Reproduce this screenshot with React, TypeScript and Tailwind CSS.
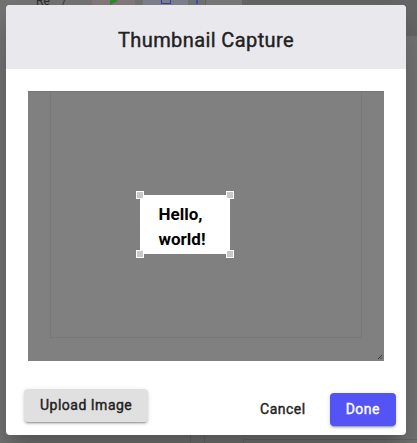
import React from "react";

function Handle() {
  return <div className="w-2 h-2 border border-white bg-[#c8c8c8]" />;
}

// Roboto Medium is not installed: regular weight thickened a little
const medium = "font-normal [-webkit-text-stroke:0.4px_currentColor]";

export default function App() {
  return (
    <div className="relative w-[417px] h-[443px] overflow-hidden bg-[#727272] font-['Roboto','Liberation_Sans',sans-serif]">
      {/* ---------- app behind the backdrop ---------- */}
      <div className="flex h-[36px]">
        <div className="flex items-start gap-3 pl-[36px] w-[92px] text-[12px] leading-[12px] text-[#2a2a2a] -mt-[5px]">
          <span>Re</span>
          <span className="text-[#333]">/</span>
        </div>
        <div className="w-[43px] bg-[#82777a] pl-[18px]">
          <div className="w-0 h-0 border-y-[4px] border-y-transparent border-l-[8px] border-l-[#2d8a2d] -mt-[3px]" />
        </div>
        <div className="w-[8px]" />
        <div className="w-[45px] bg-[#7d7f8c] flex justify-center">
          <div className="w-[10px] h-[4px] border-x border-b border-[#3c3ca8]" />
        </div>
        <div className="w-[17px] flex justify-center">
          <div className="w-[2px] h-[4px] bg-[#3b4fb0]" />
        </div>
        <div className="w-[37px] bg-[#777777] border-l border-[#666]" />
        <div className="flex-1 bg-[#656565]" />
      </div>
      <div className="flex h-[407px]">
        <div className="w-[190px]" />
        <div className="w-[15px] border-x border-[#666]" />
        <div className="flex-1 flex flex-col justify-end">
          <div className="ml-[38px] h-[4px] border-t border-l border-[#666]" />
        </div>
      </div>

      {/* ---------- dialog ---------- */}
      <div className="absolute left-[6px] top-[5px] w-[400px] h-[430px] bg-white rounded-[4px] shadow-[0_11px_15px_-7px_rgba(0,0,0,0.2),0_24px_38px_3px_rgba(0,0,0,0.14)] flex flex-col overflow-hidden">
        <div className="h-[64px] bg-[#e9e8ed] flex items-center justify-center pt-[6px]">
          <h2 className={`${medium} text-[20px] text-[#212121] tracking-[0.4px]`}>Thumbnail Capture</h2>
        </div>

        <div className="px-[22px] pt-[22px]">
          <div className="relative h-[270px] bg-[#808080] border-t border-[#757575]">
            <div className="mx-[22px] h-[246px] border-x border-b border-[#787878] flex items-start justify-center">
              <div className="relative mt-[103px] -ml-[43px] w-[90px] h-[59px] bg-white pl-[19px] pt-[7px]">
                <p className="text-[17px] font-bold leading-[25px] text-black">
                  Hello,
                  <br />
                  world!
                </p>
                <div className="absolute -left-[4px] -top-[4px]"><Handle /></div>
                <div className="absolute -right-[4px] -top-[4px]"><Handle /></div>
                <div className="absolute -left-[4px] -bottom-[4px]"><Handle /></div>
                <div className="absolute -right-[4px] -bottom-[4px]"><Handle /></div>
              </div>
            </div>
            {/* resize grip */}
            <svg className="absolute right-[1px] bottom-[1px]" width="6" height="6" viewBox="0 0 6 6">
              <path d="M5 1 L1 5 M5 3.5 L3.5 5" stroke="#333" strokeWidth="1" />
            </svg>
          </div>
        </div>

        <div className="flex-1 flex items-end justify-between pl-[18px] pr-[10px] pb-[9px]">
          <button className={`${medium} mb-[4px] h-[33px] px-4 rounded-[4px] bg-[#e0e0e0] text-[14px] tracking-[0.5px] text-[#212121] shadow-[0_3px_1px_-2px_rgba(0,0,0,0.2),0_2px_2px_0_rgba(0,0,0,0.14),0_1px_5px_0_rgba(0,0,0,0.12)]`}>
            Upload Image
          </button>
          <div className="flex items-center gap-2">
            <button className={`${medium} h-[33px] px-4 rounded-[4px] text-[14px] tracking-[0.5px] text-[#212121]`}>
              Cancel
            </button>
            <button className={`${medium} h-[33px] px-4 rounded-[4px] bg-[#5353f6] text-[14px] tracking-[0.5px] text-white shadow-[0_3px_1px_-2px_rgba(0,0,0,0.2),0_2px_2px_0_rgba(0,0,0,0.14),0_1px_5px_0_rgba(0,0,0,0.12)]`}>
              Done
            </button>
          </div>
        </div>
      </div>
    </div>
  );
}
